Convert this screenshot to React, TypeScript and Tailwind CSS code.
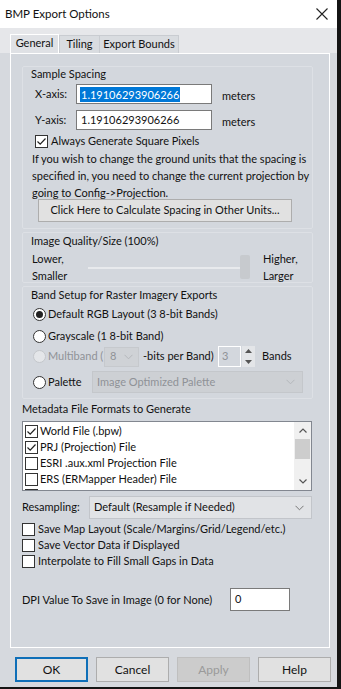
import type { ReactNode } from "react";

const font = { fontFamily: 'Lato, "Liberation Sans", Arial, sans-serif' };

function Check({ checked, className = "" }: { checked?: boolean; className?: string }) {
  return (
    <span
      className={`flex h-[13px] w-[13px] shrink-0 items-center justify-center border border-[#333] bg-white ${className}`}
    >
      {checked && (
        <svg width="11" height="11" viewBox="0 0 11 11">
          <path d="M1.5 5.5 L4.2 8.2 L9.5 2.5" fill="none" stroke="#222" strokeWidth="1.2" />
        </svg>
      )}
    </span>
  );
}

function Radio({ checked, disabled }: { checked?: boolean; disabled?: boolean }) {
  return (
    <span
      className={`flex h-[13px] w-[13px] shrink-0 items-center justify-center rounded-full border ${
        disabled ? "border-[#c4c7cb] bg-[#e4e6e9]" : "border-[#333] bg-white"
      }`}
    >
      {checked && <span className="h-[7px] w-[7px] rounded-full bg-[#222]" />}
    </span>
  );
}

function Chevron({ color = "#666" }: { color?: string }) {
  return (
    <svg width="9" height="6" viewBox="0 0 9 6" className="shrink-0">
      <path d="M0.5 0.8 L4.5 4.8 L8.5 0.8" fill="none" stroke={color} strokeWidth="1" />
    </svg>
  );
}

function Group({ children, className = "" }: { children: ReactNode; className?: string }) {
  return (
    <div className={`ml-[11px] w-[291px] rounded-[2px] border border-[#dde0e5] ${className}`}>
      {children}
    </div>
  );
}

function Btn({ children, variant }: { children: ReactNode; variant?: "default" | "disabled" }) {
  const cls =
    variant === "default"
      ? "border-2 border-[#0f6fb8] bg-[#e1e1e1] text-[#111]"
      : variant === "disabled"
        ? "border border-[#bfbfbf] bg-[#cccccc] text-[#9a9a9a]"
        : "border border-[#adadad] bg-[#e1e1e1] text-[#111]";
  return (
    <div className={`flex h-[25px] w-[73px] items-center justify-center text-[12px] ${cls}`}>
      {children}
    </div>
  );
}

const metaFiles: [string, boolean][] = [
  ["World File (.bpw)", true],
  ["PRJ (Projection) File", true],
  ["ESRI .aux.xml Projection File", false],
  ["ERS (ERMapper Header) File", false],
  ["TAB (MapInfo) File", false],
];

export default function App() {
  return (
    <div className="h-[689px] w-[341px] bg-[#141414]" style={font}>
      <div className="flex h-[687px] w-[337px] flex-col whitespace-nowrap bg-[#d6d9de] text-[11px] text-[#111]">
        {/* title bar */}
        <div className="flex h-[28px] items-center justify-between bg-white pl-[5px] pr-[9px]">
          <span className="text-[11.5px] text-[#111]">BMP Export Options</span>
          <svg width="12" height="12" viewBox="0 0 12 12">
            <path d="M0.5 0.5 L11.5 11.5 M11.5 0.5 L0.5 11.5" stroke="#222" strokeWidth="1.1" />
          </svg>
        </div>

        {/* tabs */}
        <div className="flex h-[25px] items-end bg-[#e6e7ea] pl-[10px]">
          <div className="-mb-px flex h-[20px] w-[49px] items-center justify-center border border-b-0 border-white bg-[#dfe1e5] pb-[2px]">
            General
          </div>
          <div className="flex h-[18px] w-[41px] items-center justify-center border border-b-0 border-[#c9ccd1] bg-[#d9dce0]">
            Tiling
          </div>
          <div className="flex h-[18px] w-[79px] items-center justify-center border border-b-0 border-l-0 border-[#c9ccd1] bg-[#d9dce0]">
            Export Bounds
          </div>
        </div>

        {/* panel */}
        <div className="ml-[10px] flex h-[595px] w-[320px] flex-col border border-white bg-[#d3d7dd]">
          {/* Sample spacing */}
          <Group className="mt-[12px] h-[163px]">
            <div className="h-[14px] pl-[8px] leading-[14px]">Sample Spacing</div>
            <div className="mt-[3px] flex h-[20px] items-center">
              <span className="w-[53px] pl-[12px]">X-axis:</span>
              <div className="flex h-[20px] w-[136px] items-center border border-[#7a7a7a] bg-white pl-[3px]">
                <span className="bg-[#0078d7] px-[1px] leading-[15px] text-white">1.19106293906266</span>
              </div>
              <span className="ml-[10px] mt-[5px]">meters</span>
            </div>
            <div className="mt-[6px] flex h-[20px] items-center">
              <span className="w-[53px] pl-[12px]">Y-axis:</span>
              <div className="flex h-[20px] w-[136px] items-center border border-[#7a7a7a] bg-white pl-[4px]">
                1.19106293906266
              </div>
              <span className="ml-[10px] mt-[5px]">meters</span>
            </div>
            <div className="mt-[5px] flex h-[13px] items-center pl-[12px]">
              <Check checked />
              <span className="ml-[3px]">Always Generate Square Pixels</span>
            </div>
            <p className="mt-[2px] pl-[9px] leading-[17px]">
              If you wish to change the ground units that the spacing is
              <br />
              specified in, you need to change the current projection by
              <br />
              going to Config-&gt;Projection.
            </p>
            <div className="ml-[15px] mt-[-2px] flex h-[23px] w-[254px] items-center justify-center border border-[#adadad] bg-[#e1e1e1]">
              Click Here to Calculate Spacing in Other Units...
            </div>
          </Group>

          {/* Image quality */}
          <Group className="mt-[3px] h-[51px]">
            <div className="mt-[1px] h-[14px] pl-[8px] leading-[14px]">Image Quality/Size (100%)</div>
            <div className="mt-[2px] flex">
              <div className="w-[56px] shrink-0 pl-[9px] leading-[17px]">
                Lower,
                <br />
                Smaller
              </div>
              <div className="relative mt-[5px] h-[26px] w-[171px] shrink-0">
                <div className="absolute left-[9px] right-[4px] top-[12px] h-[2px] bg-[#e8eaed]" />
                <div className="absolute left-[161px] top-0 h-[24px] w-[10px] rounded-[2px] bg-[#c7cace]" />
              </div>
              <div className="ml-[13px] leading-[17px]">
                Higher,
                <br />
                Larger
              </div>
            </div>
          </Group>

          {/* Band setup */}
          <Group className="mt-[3px] h-[113px]">
            <div className="mt-[1px] h-[14px] pl-[8px] leading-[14px]">
              Band Setup for Raster Imagery Exports
            </div>
            <div className="mt-[4px] flex h-[16px] items-center pl-[10px]">
              <Radio checked />
              <span className="ml-[2px]">Default RGB Layout (3 8-bit Bands)</span>
            </div>
            <div className="mt-[6px] flex h-[16px] items-center pl-[10px]">
              <Radio />
              <span className="ml-[2px]">Grayscale (1 8-bit Band)</span>
            </div>
            <div className="mt-[2px] flex h-[21px] items-center pl-[10px]">
              <Radio disabled />
              <span className="ml-[2px] w-[54px] shrink-0 text-[#8f9297]">Multiband (</span>
              <div className="ml-[2px] flex h-[20px] w-[35px] shrink-0 items-center justify-between border border-[#c6c9cd] bg-[#cfd2d6] pl-[5px] pr-[5px] text-[#8f9297]">
                8
                <Chevron color="#b4b7bb" />
              </div>
              <span className="ml-[4px] w-[71px] shrink-0">-bits per Band)</span>
              <div className="ml-[4px] flex h-[21px] w-[23px] shrink-0 items-start border border-white pl-[3px] pt-[1px] text-[#8f9297]">
                3
              </div>
              <div className="ml-[1px] flex h-[21px] w-[13px] shrink-0 flex-col items-center justify-around bg-[#e3e5e8]">
                <svg width="7" height="4" viewBox="0 0 7 4">
                  <path d="M0 4 L3.5 0 L7 4 Z" fill="#555" />
                </svg>
                <svg width="7" height="4" viewBox="0 0 7 4">
                  <path d="M0 0 L3.5 4 L7 0 Z" fill="#555" />
                </svg>
              </div>
              <span className="ml-[7px]">Bands</span>
            </div>
            <div className="mt-[4px] flex h-[22px] items-center pl-[10px]">
              <Radio />
              <span className="ml-[2px] w-[42px] shrink-0">Palette</span>
              <div className="ml-[2px] flex h-[22px] w-[211px] shrink-0 items-center justify-between border border-[#c4c7cb] bg-[#cdd0d4] pl-[4px] pr-[7px] text-[#8f9297]">
                Image Optimized Palette
                <Chevron color="#b4b7bb" />
              </div>
            </div>
          </Group>

          {/* Metadata */}
          <div className="mt-[3px] h-[14px] pl-[11px] leading-[14px]">Metadata File Formats to Generate</div>
          <div className="ml-[11px] mt-[5px] flex h-[70px] w-[290px] overflow-hidden border border-[#828790] bg-white">
            <div className="h-[68px] flex-1 overflow-hidden pl-[2px] pt-[1px]">
              {metaFiles.map(([label, on]) => (
                <div key={label} className="flex h-[16px] items-center">
                  <Check checked={on} />
                  <span className="ml-[2px]">{label}</span>
                </div>
              ))}
            </div>
            <div className="flex w-[17px] flex-col items-center bg-[#f0f0f0]">
              <div className="flex h-[17px] items-center">
                <svg width="8" height="5" viewBox="0 0 8 5">
                  <path d="M0.5 4.5 L4 1 L7.5 4.5" fill="none" stroke="#555" strokeWidth="1.2" />
                </svg>
              </div>
              <div className="h-[20px] w-[15px] bg-[#cdcdcd]" />
              <div className="flex-1" />
              <div className="flex h-[17px] items-center">
                <svg width="8" height="5" viewBox="0 0 8 5">
                  <path d="M0.5 0.5 L4 4 L7.5 0.5" fill="none" stroke="#555" strokeWidth="1.2" />
                </svg>
              </div>
            </div>
          </div>

          {/* Resampling */}
          <div className="mt-[5px] flex h-[23px] items-center pl-[11px]">
            <span className="w-[67px] shrink-0">Resampling:</span>
            <div className="flex h-[23px] w-[223px] shrink-0 items-center justify-between border border-[#c2c5ca] bg-[#e1e3e6] pl-[4px] pr-[7px]">
              Default (Resample if Needed)
              <Chevron color="#777" />
            </div>
          </div>

          <div className="mt-[2px] flex h-[16px] items-center pl-[11px]">
            <Check />
            <span className="ml-[3px]">Save Map Layout (Scale/Margins/Grid/Legend/etc.)</span>
          </div>
          <div className="flex h-[16px] items-center pl-[11px]">
            <Check />
            <span className="ml-[3px]">Save Vector Data if Displayed</span>
          </div>
          <div className="flex h-[16px] items-center pl-[11px]">
            <Check />
            <span className="ml-[3px]">Interpolate to Fill Small Gaps in Data</span>
          </div>

          <div className="mt-[19px] flex h-[23px] items-center pl-[11px]">
            <span className="mt-[2px] w-[208px] shrink-0">DPI Value To Save in Image (0 for None)</span>
            <div className="flex h-[23px] w-[60px] shrink-0 items-center border border-[#7a7a7a] bg-white pl-[4px]">
              0
            </div>
          </div>
        </div>

        {/* buttons */}
        <div className="mt-[9px] flex gap-[8px] pl-[15px]">
          <Btn variant="default">OK</Btn>
          <Btn>Cancel</Btn>
          <Btn variant="disabled">Apply</Btn>
          <Btn>Help</Btn>
        </div>
      </div>
    </div>
  );
}
